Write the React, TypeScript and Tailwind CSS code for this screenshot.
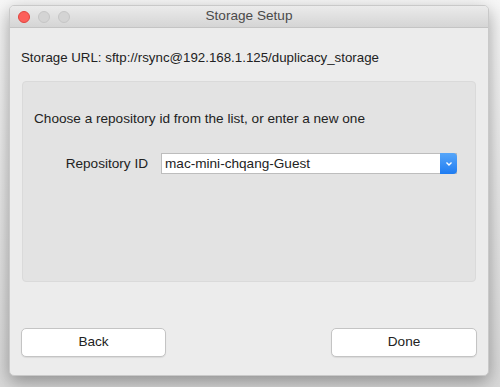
import React from "react";

const App = () => {
  return (
    <div
      className="h-[387px] w-[500px] bg-gradient-to-b from-[#f7f7f7] to-[#d9d9d9] pl-[9px] pt-[5px]"
      style={{ fontFamily: '"Helvetica Neue", "Liberation Sans", Arial, sans-serif' }}
    >
      <div className="flex h-[371px] w-[480px] flex-col overflow-hidden rounded-[5px] border border-[#c9c9c9] bg-[#ececec] shadow-[0_6px_18px_rgba(0,0,0,0.35)]">
        {/* title bar */}
        <div className="relative flex h-[22px] shrink-0 items-center justify-center border-b border-[#c4c4c4] bg-gradient-to-b from-[#ebebeb] to-[#d5d5d5]">
          <div className="absolute left-[8px] top-[5px] flex gap-[8px]">
            <div className="h-[12px] w-[12px] rounded-full border border-[#e0443e] bg-[#fc605b]"></div>
            <div className="h-[12px] w-[12px] rounded-full border border-[#c6c6c6] bg-[#d4d4d4]"></div>
            <div className="h-[12px] w-[12px] rounded-full border border-[#c6c6c6] bg-[#d4d4d4]"></div>
          </div>
          <div className="text-[13.6px] text-[#4a4a4a]">Storage Setup</div>
        </div>

        <div className="flex flex-1 flex-col px-[11px]">
          <div className="mt-[20px] text-[13.3px] text-[#222]">
            Storage URL: sftp://rsync@192.168.1.125/duplicacy_storage
          </div>

          <div className="mt-[13px] ml-[1px] h-[201px] w-[454px] rounded-[4px] border border-[#dadada] bg-[#e3e3e3] px-[11px]">
            <div className="mt-[27px] text-[13.6px] text-[#222]">
              Choose a repository id from the list, or enter a new one
            </div>
            <div className="mt-[24px] flex items-center">
              <div className="w-[127px] pr-[13px] text-right text-[13.6px] text-[#222]">Repository ID</div>
              <div className="flex h-[21px] w-[296px] items-center border border-[#bdbdbd] bg-white">
                <div className="flex-1 pl-[3px] text-[13.6px] leading-none text-[#222]">mac-mini-chqang-Guest</div>
                <div className="-mr-[1px] flex h-[21px] w-[17px] items-center justify-center rounded-r-[4px] bg-gradient-to-b from-[#56a6f9] to-[#1d7cf2]">
                  <svg width="8" height="6" viewBox="0 0 8 6">
                    <path d="M1.5 1.5 L4 4 L6.5 1.5" fill="none" stroke="white" strokeWidth="1.4" />
                  </svg>
                </div>
              </div>
            </div>
          </div>

          <div className="mt-[46px] flex justify-between">
            <button className="h-[29px] w-[145px] rounded-[5px] border border-[#c4c4c4] bg-white text-[13.6px] text-[#222] shadow-[0_1px_1px_rgba(0,0,0,0.08)]">
              Back
            </button>
            <button className="h-[29px] w-[146px] rounded-[5px] border border-[#c4c4c4] bg-white text-[13.6px] text-[#222] shadow-[0_1px_1px_rgba(0,0,0,0.08)]">
              Done
            </button>
          </div>
        </div>
      </div>
    </div>
  );
};

export default App;
